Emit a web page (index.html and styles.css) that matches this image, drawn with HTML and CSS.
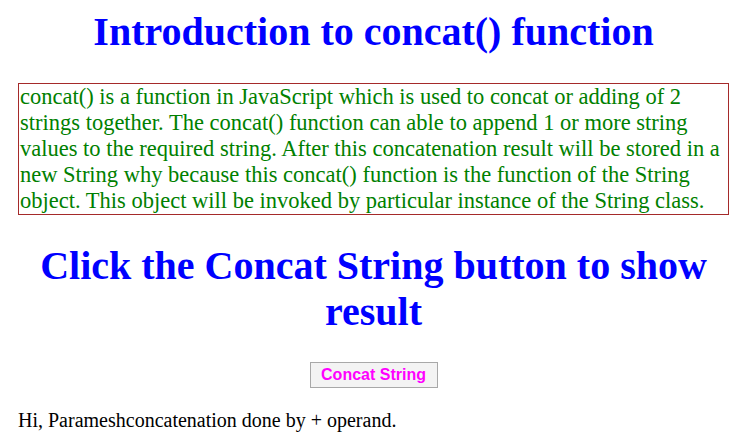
FILE: index.html
```html
<!DOCTYPE html>
<html>
<head>
<meta charset="utf-8">
<title>concat</title>
<link rel="stylesheet" href="styles.css">
</head>
<body>
<h1 class="title">Introduction to concat() function</h1>
<p class="intro">concat() is a function in JavaScript which is used to concat or adding of 2 strings together. The concat() function can able to append 1 or more string values to the required string. After this concatenation result will be stored in a new String why because this concat() function is the function of the String object. This object will be invoked by particular instance of the String class.</p>
<h2 class="title sub">Click the Concat String button to show result</h2>
<div class="actions"><button class="btn" type="button">Concat String</button></div>
<p class="result">Hi, Parameshconcatenation done by + operand.</p>
</body>
</html>
```
FILE: styles.css
```css
html, body { background: #fff; }
body {
  margin: 0;
  padding: 0 9px 0 18px;
  font-family: "Liberation Serif", "Times New Roman", serif;
}
.title {
  color: #0000ff;
  text-align: center;
  font-weight: bold;
  font-size: 40px;
  margin: 9px 0 0;
  line-height: 46px;
}
.intro {
  margin: 28px 0 0;
  border: 1px solid #a52a2a;
  color: #008000;
  font-size: 22.5px;
  line-height: 26px;
  padding: 0 0 0 1px;
}
.sub {
  margin-top: 28px;
}
.actions {
  margin-top: 27px;
  display: flex;
  justify-content: center;
}
.btn {
  font-family: "Liberation Sans", Arial, sans-serif;
  font-size: 16px;
  font-weight: bold;
  color: #ff00ff;
  background: #f3f3f3;
  border: 1px solid #a8a8a8;
  padding: 0 10px;
  height: 26px;
  width: 128px;
}
.result {
  margin: 21px 0 0;
  font-size: 20px;
  line-height: 23px;
  color: #000;
}
```
